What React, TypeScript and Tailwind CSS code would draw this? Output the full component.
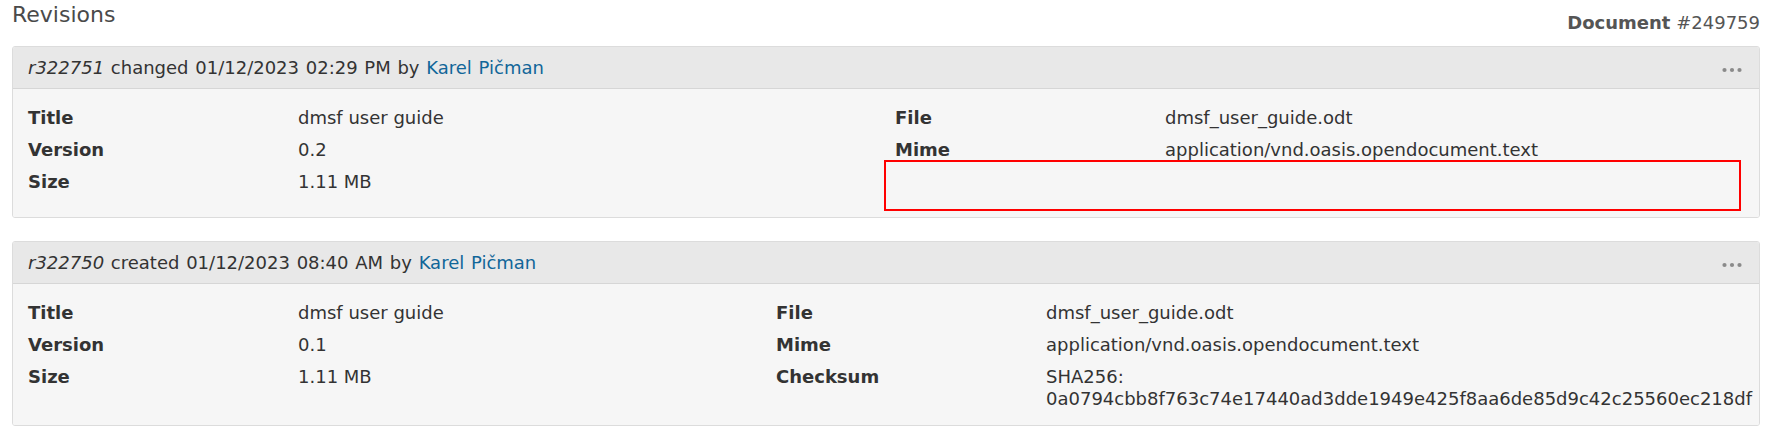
const revisions = [
  {
    rev: "r322751",
    action: "changed",
    date: "01/12/2023 02:29 PM",
    author: "Karel Pičman",
    cols: "grid-cols-2",
    bodyPad: "pb-[19px]",
    left: [
      ["Title", "dmsf user guide"],
      ["Version", "0.2"],
      ["Size", "1.11 MB"],
    ],
    right: [
      ["File", "dmsf_user_guide.odt"],
      ["Mime", "application/vnd.oasis.opendocument.text"],
    ],
    highlight: true,
  },
  {
    rev: "r322750",
    action: "created",
    date: "01/12/2023 08:40 AM",
    author: "Karel Pičman",
    cols: "grid-cols-[748px_1fr]",
    bodyPad: "pb-[10px]",
    left: [
      ["Title", "dmsf user guide"],
      ["Version", "0.1"],
      ["Size", "1.11 MB"],
    ],
    right: [
      ["File", "dmsf_user_guide.odt"],
      ["Mime", "application/vnd.oasis.opendocument.text"],
      ["Checksum", "SHA256:\n0a0794cbb8f763c74e17440ad3dde1949e425f8aa6de85d9c42c25560ec218df"],
    ],
    highlight: false,
  },
];

const Row = ({ label, value }: { label: string; value: string }) => (
  <div className="flex py-[5px] leading-[22px]">
    <div className="w-[270px] shrink-0 pl-[9px] font-bold text-[#333]">{label}</div>
    <div className="pl-[9px] text-[#333]">
      {value.split("\n").map((line, i) => (
        <div key={i} className="whitespace-nowrap">
          {line}
        </div>
      ))}
    </div>
  </div>
);

const Dots = () => (
  <svg width="20" height="6" viewBox="0 0 20 6" className="mr-[17px] mt-[3px]">
    <circle cx="2.5" cy="3" r="2.1" fill="#8a8a8a" />
    <circle cx="10" cy="3" r="2.1" fill="#8a8a8a" />
    <circle cx="17.5" cy="3" r="2.1" fill="#8a8a8a" />
  </svg>
);

export default function App() {
  return (
    <div className="min-h-screen bg-white pl-[12px] pr-[20px] font-['DejaVu_Sans',sans-serif] text-[18px] text-[#333]">
      <div className="mb-[12px] flex items-start justify-between">
        <h2 className="text-[22px] leading-[30px] text-[#4a4a4a]">Revisions</h2>
        <div className="mt-[12px] leading-[22px] text-[#555]">
          <span className="font-bold">Document</span> #249759
        </div>
      </div>

      {revisions.map((r, idx) => (
        <div
          key={r.rev}
          className={`overflow-hidden rounded-[3px] border border-[#dcdcdc] ${idx > 0 ? "mt-[23px]" : ""}`}
        >
          <div className="flex items-center justify-between border-b border-[#d6d6d6] bg-[#e8e8e8] pb-[9px] pl-[15px] pt-[10px] leading-[22px]">
            <div className="[word-spacing:1px]">
              <em>{r.rev}</em> {r.action} {r.date} by{" "}
              <a className="text-[#169]">{r.author}</a>
            </div>
            <Dots />
          </div>
          <div className={`relative bg-[#f6f6f6] px-[6px] pt-[13px] ${r.bodyPad}`}>
            <div className={`grid ${r.cols}`}>
              <div>
                {r.left.map(([l, v]) => (
                  <Row key={l} label={l} value={v} />
                ))}
              </div>
              <div>
                {r.right.map(([l, v]) => (
                  <Row key={l} label={l} value={v} />
                ))}
              </div>
            </div>
            {r.highlight && (
              <div className="absolute left-[871px] top-[71px] h-[51px] w-[857px] border-2 border-[#ff0000]" />
            )}
          </div>
        </div>
      ))}
    </div>
  );
}
